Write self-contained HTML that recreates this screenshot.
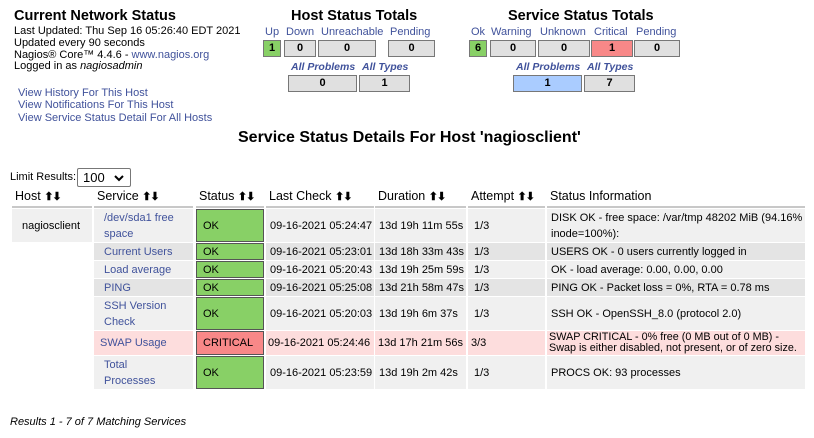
<!DOCTYPE html>
<html><head><meta charset="utf-8"><style>
*{margin:0;padding:0;box-sizing:border-box}
body{width:814px;height:438px;background:#fff;font-family:"Liberation Sans",Arial,sans-serif;font-size:12px;color:#000;position:relative;overflow:hidden}
.a{position:absolute;white-space:nowrap}
.lnk{color:#40529b}
.b{position:absolute;height:17px;border:1px solid #777;background:#e0e0e0;text-align:center;font-weight:bold;font-size:11px;line-height:15px}
.lbl{position:absolute;color:#40529b;font-size:11px;white-space:nowrap}
.c{position:absolute;display:flex;align-items:center;padding-left:6px;font-size:11px;line-height:16px;white-space:nowrap;overflow:hidden}
.th{position:absolute;top:189px;height:19px;font-size:12.5px;border-bottom:2px solid #c8c8c8;padding-left:3px;white-space:nowrap}
.ar{font-size:11px;letter-spacing:-1px;font-weight:bold}
</style></head><body>
<div class="a" style="left:14px;top:8px;font-size:14.5px;font-weight:bold">Current Network Status</div>
<div class="a" style="left:14px;top:26px;line-height:11.8px;font-size:11px">Last Updated: Thu Sep 16 05:26:40 EDT 2021<br>Updated every 90 seconds<br>Nagios® Core™ 4.4.6 - <span class="lnk">www.nagios.org</span><br>Logged in as <i>nagiosadmin</i></div>
<div class="a lnk" style="left:18px;top:87px;line-height:12.3px;font-size:11px">View History For This Host<br>View Notifications For This Host<br>View Service Status Detail For All Hosts</div>

<div class="a" style="left:291px;top:8px;font-size:14.5px;font-weight:bold">Host Status Totals</div>
<div class="lbl" style="left:265px;top:26px">Up</div>
<div class="lbl" style="left:286px;top:26px">Down</div>
<div class="lbl" style="left:321px;top:26px">Unreachable</div>
<div class="lbl" style="left:390px;top:26px">Pending</div>
<div class="b" style="left:263px;top:40px;width:18px;background:#88d066">1</div>
<div class="b" style="left:284px;top:40px;width:32px">0</div>
<div class="b" style="left:318px;top:40px;width:58px">0</div>
<div class="b" style="left:388px;top:40px;width:47px">0</div>
<div class="lbl" style="left:291px;top:61px;font-style:italic;font-weight:bold;font-size:10.5px">All Problems</div>
<div class="lbl" style="left:362px;top:61px;font-style:italic;font-weight:bold;font-size:10.5px">All Types</div>
<div class="b" style="left:288px;top:75px;width:69px">0</div>
<div class="b" style="left:359px;top:75px;width:51px">1</div>

<div class="a" style="left:508px;top:8px;font-size:14.5px;font-weight:bold">Service Status Totals</div>
<div class="lbl" style="left:471px;top:26px">Ok</div>
<div class="lbl" style="left:491px;top:26px">Warning</div>
<div class="lbl" style="left:540px;top:26px">Unknown</div>
<div class="lbl" style="left:594px;top:26px">Critical</div>
<div class="lbl" style="left:636px;top:26px">Pending</div>
<div class="b" style="left:469px;top:40px;width:18px;background:#88d066">6</div>
<div class="b" style="left:490px;top:40px;width:46px">0</div>
<div class="b" style="left:538px;top:40px;width:52px">0</div>
<div class="b" style="left:591px;top:40px;width:42px;background:#f88888">1</div>
<div class="b" style="left:634px;top:40px;width:46px">0</div>
<div class="lbl" style="left:516px;top:61px;font-style:italic;font-weight:bold;font-size:10.5px">All Problems</div>
<div class="lbl" style="left:587px;top:61px;font-style:italic;font-weight:bold;font-size:10.5px">All Types</div>
<div class="b" style="left:513px;top:75px;width:69px;background:#aaccff">1</div>
<div class="b" style="left:584px;top:75px;width:51px">7</div>

<div class="a" style="left:238px;top:129px;font-size:16px;font-weight:bold">Service Status Details For Host 'nagiosclient'</div>

<div class="a" style="left:10px;top:171px;font-size:11px">Limit Results:</div>
<div class="a" style="left:77px;top:168px;width:54px;height:19px;border:1px solid #777;border-radius:2px;font-size:13px;padding-left:5px;line-height:17px">100 <svg style="position:absolute;right:6px;top:6px" width="10" height="7" viewBox="0 0 10 7"><path d="M1 1 L5 5 L9 1" fill="none" stroke="#000" stroke-width="2"/></svg></div>

<div class="th" style="left:12px;width:80px">Host <span class="ar">⬆⬇</span></div>
<div class="th" style="left:94px;width:99px">Service <span class="ar">⬆⬇</span></div>
<div class="th" style="left:196px;width:68px">Status <span class="ar">⬆⬇</span></div>
<div class="th" style="left:266px;width:108px">Last Check <span class="ar">⬆⬇</span></div>
<div class="th" style="left:375px;width:91px">Duration <span class="ar">⬆⬇</span></div>
<div class="th" style="left:468px;width:77px">Attempt <span class="ar">⬆⬇</span></div>
<div class="th" style="left:547px;width:258px;font-weight:normal">Status Information</div>

<div class="c" style="left:12px;top:209px;width:80px;height:33px;background:#f0f0f0;padding-left:10px">nagiosclient</div>

<div class="c" style="left:94px;top:209px;width:99px;height:33px;background:#f0f0f0;color:#40529b;padding-left:10px">/dev/sda1 free<br>space</div>
<div class="c" style="left:94px;top:243px;width:99px;height:17px;background:#e4e4e4;color:#40529b;padding-left:10px">Current Users</div>
<div class="c" style="left:94px;top:261px;width:99px;height:17px;background:#f0f0f0;color:#40529b;padding-left:10px">Load average</div>
<div class="c" style="left:94px;top:279px;width:99px;height:17px;background:#e4e4e4;color:#40529b;padding-left:10px">PING</div>
<div class="c" style="left:94px;top:297px;width:99px;height:33px;background:#f0f0f0;color:#40529b;padding-left:10px">SSH Version<br>Check</div>
<div class="c" style="left:94px;top:331px;width:99px;height:24px;background:#fddddd;color:#40529b">SWAP Usage</div>
<div class="c" style="left:94px;top:356px;width:99px;height:33px;background:#f0f0f0;color:#40529b;padding-left:10px">Total<br>Processes</div>

<div class="c" style="left:196px;top:209px;width:68px;height:33px;background:#88d066;border:1px solid #555">OK</div>
<div class="c" style="left:196px;top:243px;width:68px;height:17px;background:#88d066;border:1px solid #555">OK</div>
<div class="c" style="left:196px;top:261px;width:68px;height:17px;background:#88d066;border:1px solid #555">OK</div>
<div class="c" style="left:196px;top:279px;width:68px;height:17px;background:#88d066;border:1px solid #555">OK</div>
<div class="c" style="left:196px;top:297px;width:68px;height:33px;background:#88d066;border:1px solid #555">OK</div>
<div class="c" style="left:196px;top:331px;width:68px;height:24px;background:#f88888;border:1px solid #555">CRITICAL</div>
<div class="c" style="left:196px;top:356px;width:68px;height:33px;background:#88d066;border:1px solid #555">OK</div>

<div class="c" style="left:266px;top:209px;width:108px;height:33px;background:#f0f0f0;padding-left:4px">09-16-2021 05:24:47</div>
<div class="c" style="left:266px;top:243px;width:108px;height:17px;background:#e4e4e4;padding-left:4px">09-16-2021 05:23:01</div>
<div class="c" style="left:266px;top:261px;width:108px;height:17px;background:#f0f0f0;padding-left:4px">09-16-2021 05:20:43</div>
<div class="c" style="left:266px;top:279px;width:108px;height:17px;background:#e4e4e4;padding-left:4px">09-16-2021 05:25:08</div>
<div class="c" style="left:266px;top:297px;width:108px;height:33px;background:#f0f0f0;padding-left:4px">09-16-2021 05:20:03</div>
<div class="c" style="left:266px;top:331px;width:108px;height:24px;background:#fddddd;padding-left:2px">09-16-2021 05:24:46</div>
<div class="c" style="left:266px;top:356px;width:108px;height:33px;background:#f0f0f0;padding-left:4px">09-16-2021 05:23:59</div>

<div class="c" style="left:375px;top:209px;width:91px;height:33px;background:#f0f0f0;padding-left:4px">13d 19h 11m 55s</div>
<div class="c" style="left:375px;top:243px;width:91px;height:17px;background:#e4e4e4;padding-left:4px">13d 18h 33m 43s</div>
<div class="c" style="left:375px;top:261px;width:91px;height:17px;background:#f0f0f0;padding-left:4px">13d 19h 25m 59s</div>
<div class="c" style="left:375px;top:279px;width:91px;height:17px;background:#e4e4e4;padding-left:4px">13d 21h 58m 47s</div>
<div class="c" style="left:375px;top:297px;width:91px;height:33px;background:#f0f0f0;padding-left:4px">13d 19h 6m 37s</div>
<div class="c" style="left:375px;top:331px;width:91px;height:24px;background:#fddddd;padding-left:3px">13d 17h 21m 56s</div>
<div class="c" style="left:375px;top:356px;width:91px;height:33px;background:#f0f0f0;padding-left:4px">13d 19h 2m 42s</div>

<div class="c" style="left:468px;top:209px;width:77px;height:33px;background:#f0f0f0">1/3</div>
<div class="c" style="left:468px;top:243px;width:77px;height:17px;background:#e4e4e4">1/3</div>
<div class="c" style="left:468px;top:261px;width:77px;height:17px;background:#f0f0f0">1/3</div>
<div class="c" style="left:468px;top:279px;width:77px;height:17px;background:#e4e4e4">1/3</div>
<div class="c" style="left:468px;top:297px;width:77px;height:33px;background:#f0f0f0">1/3</div>
<div class="c" style="left:468px;top:331px;width:77px;height:24px;background:#fddddd;padding-left:3px">3/3</div>
<div class="c" style="left:468px;top:356px;width:77px;height:33px;background:#f0f0f0">1/3</div>

<div class="c" style="left:547px;top:209px;width:258px;height:33px;background:#f0f0f0;padding-left:4px">DISK OK - free space: /var/tmp 48202 MiB (94.16%<br>inode=100%):</div>
<div class="c" style="left:547px;top:243px;width:258px;height:17px;background:#e4e4e4;padding-left:4px">USERS OK - 0 users currently logged in</div>
<div class="c" style="left:547px;top:261px;width:258px;height:17px;background:#f0f0f0;padding-left:4px">OK - load average: 0.00, 0.00, 0.00</div>
<div class="c" style="left:547px;top:279px;width:258px;height:17px;background:#e4e4e4;padding-left:4px">PING OK - Packet loss = 0%, RTA = 0.78 ms</div>
<div class="c" style="left:547px;top:297px;width:258px;height:33px;background:#f0f0f0;padding-left:4px">SSH OK - OpenSSH_8.0 (protocol 2.0)</div>
<div class="c" style="left:547px;top:331px;width:258px;height:24px;background:#fddddd;padding-left:2px;line-height:11.5px;font-size:10.8px">SWAP CRITICAL - 0% free (0 MB out of 0 MB) -<br>Swap is either disabled, not present, or of zero size.</div>
<div class="c" style="left:547px;top:356px;width:258px;height:33px;background:#f0f0f0;padding-left:4px">PROCS OK: 93 processes</div>

<div class="a" style="left:10px;top:416px;font-size:11px;font-style:italic">Results 1 - 7 of 7 Matching Services</div>
</body></html>
